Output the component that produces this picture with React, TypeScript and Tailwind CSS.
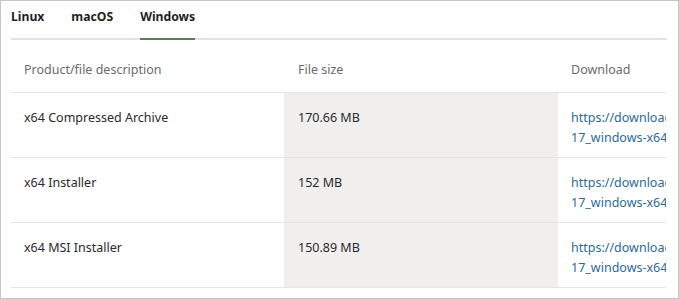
const rows = [
  { name: 'x64 Compressed Archive', size: '170.66 MB' },
  { name: 'x64 Installer', size: '152 MB' },
  { name: 'x64 MSI Installer', size: '150.89 MB' },
];

const tabs = ['Linux', 'macOS', 'Windows'];

export default function App() {
  return (
    <div
      className="w-[679px] h-[299px] border border-[#c4c4c4] bg-white overflow-hidden"
      style={{ fontFamily: '"Noto Sans", sans-serif' }}
    >
      <div className="pl-[10px] w-[666px]">
        <div className="flex gap-[27px] border-b-2 border-[#e5e2de] h-[39px]">
          {tabs.map((tab) => (
            <div
              key={tab}
              className={
                'text-[12.2px] font-bold text-[#1f1f1f] pt-[6px] leading-[20px] -mb-[2px] ' +
                (tab === 'Windows' ? 'border-b-2 border-[#5b7e4e]' : '')
              }
            >
              {tab}
            </div>
          ))}
        </div>
        <div className="grid grid-cols-[273px_274px_108px] text-[12.5px] leading-[20px]">
          <div className="h-[53px] border-b border-[#e4e4e4] pl-[13px] pt-[20px] text-[#6b6b6b]">
            Product/file description
          </div>
          <div className="h-[53px] border-b border-[#e4e4e4] pl-[14px] pt-[20px] text-[#6b6b6b]">
            File size
          </div>
          <div className="h-[53px] border-b border-[#e4e4e4] pl-[13px] pt-[20px] text-[#6b6b6b]">
            Download
          </div>
          {rows.map((r) => (
            <div key={r.name} className="contents">
              <div className="h-[65px] border-b border-[#e4e4e4] pl-[13px] pt-[15px] text-[#2a2a2a]">
                {r.name}
              </div>
              <div className="h-[65px] border-b border-[#e4e4e4] bg-[#f1efed] pl-[14px] pt-[15px] text-[#2a2a2a]">
                {r.size}
              </div>
              <div className="h-[65px] border-b border-[#e4e4e4] pl-[13px] pt-[15px] text-[#2d6b94] overflow-hidden whitespace-nowrap">
                <div>https://download.oracle.com/java/17/latest/jdk-</div>
                <div>17_windows-x64_bin.zip</div>
              </div>
            </div>
          ))}
        </div>
      </div>
    </div>
  );
}
